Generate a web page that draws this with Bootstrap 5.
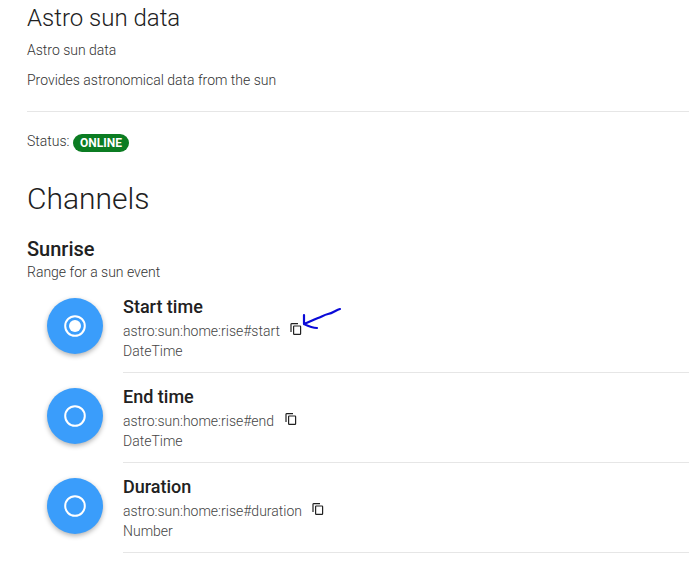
<!DOCTYPE html>
<html lang="en">
<head>
<meta charset="utf-8">
<title>Astro sun data</title>
<link href="https://cdn.jsdelivr.net/npm/bootstrap@5.3.0/dist/css/bootstrap.min.css" rel="stylesheet">
<style>
html,body{height:561px;overflow:hidden;}
body{font-family:Roboto,sans-serif;font-weight:300;color:#212121;background:#fff;}
.page-wrap{position:relative;padding-left:27px;height:561px;overflow:hidden;}
.thing-title{font-size:24px;font-weight:300;line-height:28px;margin:4px 0 0;color:#212121;}
.thing-text{font-size:14px;line-height:20px;margin:0;color:#333;}
.thing-label{margin-top:8px;}
.thing-desc{margin-top:10px;}
.thing-rule{margin:21px 0 0;border:0;border-top:1px solid #e6e6e6;opacity:1;}
.status-row{margin-top:19px;height:20px;font-size:14px;line-height:20px;color:#333;}
.status-pill{display:inline-block;background:#0b7c22;color:#fff;font-weight:700;font-size:12px;line-height:18px;height:18px;border-radius:9px;padding:0 7px;margin-left:0;vertical-align:-1px;}
.section-title{font-size:30px;font-weight:300;line-height:36px;margin:30px 0 0;color:#212121;}
.group-title{font-size:20px;font-weight:500;line-height:24px;margin:20px 0 0;color:#212121;}
.group-desc{font-size:14px;line-height:18px;margin:2px 0 0;color:#333;}
.chan-list{margin:9px 0 0;padding:0;list-style:none;}
.chan-item{height:90px;padding-left:20px;}
.chan-disc{width:56px;height:56px;border-radius:50%;background:#3a9dfb;box-shadow:0 2px 5px rgba(0,0,0,.3);margin-top:8px;flex:none;}
.chan-body{margin-left:20px;height:83px;border-bottom:1px solid #e6e6e6;padding-top:7px;}
.chan-name{font-size:18px;font-weight:500;line-height:20px;color:#212121;}
.chan-uid{font-size:14px;line-height:20px;margin-top:4px;color:#444;}
.chan-type{font-size:14px;line-height:20px;color:#444;}
.copy-ico{margin-left:7px;vertical-align:1px;}
.arrow-mark{position:absolute;left:301px;top:307px;}
</style>
</head>
<body>
<div class="page-wrap">
  <h1 class="thing-title">Astro sun data</h1>
  <p class="thing-text thing-label">Astro sun data</p>
  <p class="thing-text thing-desc">Provides astronomical data from the sun</p>
  <hr class="thing-rule">
  <div class="status-row">Status: <span class="status-pill">ONLINE</span></div>
  <h2 class="section-title">Channels</h2>
  <h3 class="group-title">Sunrise</h3>
  <p class="group-desc">Range for a sun event</p>
  <ul class="chan-list">
    <li class="chan-item d-flex">
      <div class="chan-disc d-flex align-items-center justify-content-center">
        <svg width="22" height="22" viewBox="0 0 22 22"><circle cx="11" cy="11" r="9.8" fill="none" stroke="#fff" stroke-width="2"/><circle cx="11" cy="11" r="6" fill="#fff"/></svg>
      </div>
      <div class="chan-body flex-grow-1">
        <div class="chan-name">Start time</div>
        <div class="chan-uid">astro:sun:home:rise#start <svg class="copy-ico" width="12" height="12" viewBox="0 0 12 12"><path d="M1 9V1.2a.5.5 0 0 1 .5-.5H8" fill="none" stroke="#222" stroke-width="1.2"/><rect x="3.6" y="3" width="7" height="8.4" rx=".6" fill="none" stroke="#222" stroke-width="1.2"/></svg></div>
        <div class="chan-type">DateTime</div>
      </div>
    </li>
    <li class="chan-item d-flex">
      <div class="chan-disc d-flex align-items-center justify-content-center">
        <svg width="22" height="22" viewBox="0 0 22 22"><circle cx="11" cy="11" r="9.8" fill="none" stroke="#fff" stroke-width="2"/></svg>
      </div>
      <div class="chan-body flex-grow-1">
        <div class="chan-name">End time</div>
        <div class="chan-uid">astro:sun:home:rise#end <svg class="copy-ico" width="12" height="12" viewBox="0 0 12 12"><path d="M1 9V1.2a.5.5 0 0 1 .5-.5H8" fill="none" stroke="#222" stroke-width="1.2"/><rect x="3.6" y="3" width="7" height="8.4" rx=".6" fill="none" stroke="#222" stroke-width="1.2"/></svg></div>
        <div class="chan-type">DateTime</div>
      </div>
    </li>
    <li class="chan-item d-flex">
      <div class="chan-disc d-flex align-items-center justify-content-center">
        <svg width="22" height="22" viewBox="0 0 22 22"><circle cx="11" cy="11" r="9.8" fill="none" stroke="#fff" stroke-width="2"/></svg>
      </div>
      <div class="chan-body flex-grow-1">
        <div class="chan-name">Duration</div>
        <div class="chan-uid">astro:sun:home:rise#duration <svg class="copy-ico" width="12" height="12" viewBox="0 0 12 12"><path d="M1 9V1.2a.5.5 0 0 1 .5-.5H8" fill="none" stroke="#222" stroke-width="1.2"/><rect x="3.6" y="3" width="7" height="8.4" rx=".6" fill="none" stroke="#222" stroke-width="1.2"/></svg></div>
        <div class="chan-type">Number</div>
      </div>
    </li>
  </ul>
  <svg class="arrow-mark" width="44" height="24" viewBox="0 0 44 24"><path d="M39 2C35 3 32 6 27 7C23 8 20 10 17 11C12 13 8 15 3 17M3 8L3 17C7 19 12 21 16 21" fill="none" stroke="#0a0ad8" stroke-width="2.2" stroke-linecap="round" stroke-linejoin="round"/></svg>
</div>
<script src="https://cdn.jsdelivr.net/npm/bootstrap@5.3.0/dist/js/bootstrap.bundle.min.js"></script>
</body>
</html>
